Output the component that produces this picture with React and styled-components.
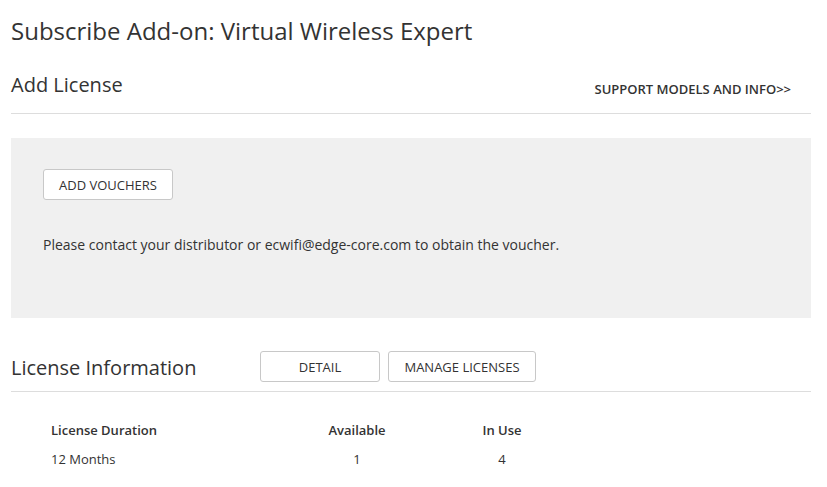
import styled, { createGlobalStyle } from 'styled-components';

const GlobalStyle = createGlobalStyle`
  body {
    margin: 0;
    background: #ffffff;
    font-family: "Open Sans", "Liberation Sans", sans-serif;
    color: #333333;
  }
`;

const Page = styled.div`
  padding: 0 16px 0 11px;
`;

const Title = styled.h1`
  margin: 0;
  padding-top: 14px;
  font-size: 24px;
  font-weight: 400;
  line-height: 33px;
  color: #333;
`;

const SectionHeader = styled.div`
  display: flex;
  align-items: flex-end;
  justify-content: ${(p) => (p.$spread ? 'space-between' : 'flex-start')};
  border-bottom: 1px solid #dddddd;
  height: 53px;
  box-sizing: border-box;
  padding-bottom: ${(p) => p.$bottom}px;
  margin-top: ${(p) => p.$top}px;
`;

const SectionTitle = styled.h2`
  margin: 0;
  font-size: 20px;
  font-weight: 400;
  line-height: 28px;
  color: #333;
  width: ${(p) => (p.$width ? `${p.$width}px` : 'auto')};
`;

const SupportLink = styled.a`
  font-size: 13px;
  font-weight: 600;
  line-height: 18px;
  color: #333;
  text-decoration: none;
  margin-right: 20px;
  margin-bottom: 1px;
  cursor: pointer;
`;

const VoucherPanel = styled.div`
  margin-top: 24px;
  background: #f0f0f0;
  height: 180px;
  padding: 31px 32px 32px;
  box-sizing: border-box;
`;

const Button = styled.button`
  font-family: inherit;
  font-size: 13px;
  color: #333;
  background: #ffffff;
  border: 1px solid #c8c8c8;
  border-radius: 3px;
  height: 31px;
  width: ${(p) => (p.$width ? `${p.$width}px` : 'auto')};
  padding: 0 15px;
  cursor: pointer;
`;

const ButtonGroup = styled.div`
  display: flex;
  gap: 8px;
`;

const Notice = styled.p`
  margin: 35px 0 0;
  font-size: 14px;
  line-height: 20px;
  color: #333;
`;

const Table = styled.div`
  padding: 23px 0 0 40px;
`;

const Row = styled.div`
  display: grid;
  grid-template-columns: 230px 152px 138px;
  height: 29px;
  align-items: center;
  font-size: 13px;
  font-weight: ${(p) => (p.$head ? 600 : 400)};
`;

const Cell = styled.div`
  text-align: ${(p) => (p.$center ? 'center' : 'left')};
`;

const licenses = [{ duration: '12 Months', available: 1, inUse: 4 }];

export default function App() {
  return (
    <>
      <GlobalStyle />
      <Page>
        <Title>Subscribe Add-on: Virtual Wireless Expert</Title>
        <SectionHeader $spread $top={14} $bottom={14}>
          <SectionTitle>Add License</SectionTitle>
          <SupportLink>SUPPORT MODELS AND INFO&gt;&gt;</SupportLink>
        </SectionHeader>
        <VoucherPanel>
          <Button>ADD VOUCHERS</Button>
          <Notice>
            Please contact your distributor or ecwifi@edge-core.com to obtain the voucher.
          </Notice>
        </VoucherPanel>
        <SectionHeader $top={21} $bottom={9}>
          <SectionTitle $width={249}>License Information</SectionTitle>
          <ButtonGroup>
            <Button $width={120}>DETAIL</Button>
            <Button $width={148}>MANAGE LICENSES</Button>
          </ButtonGroup>
        </SectionHeader>
        <Table>
          <Row $head>
            <Cell>License Duration</Cell>
            <Cell $center>Available</Cell>
            <Cell $center>In Use</Cell>
          </Row>
          {licenses.map((l) => (
            <Row key={l.duration}>
              <Cell>{l.duration}</Cell>
              <Cell $center>{l.available}</Cell>
              <Cell $center>{l.inUse}</Cell>
            </Row>
          ))}
        </Table>
      </Page>
    </>
  );
}
